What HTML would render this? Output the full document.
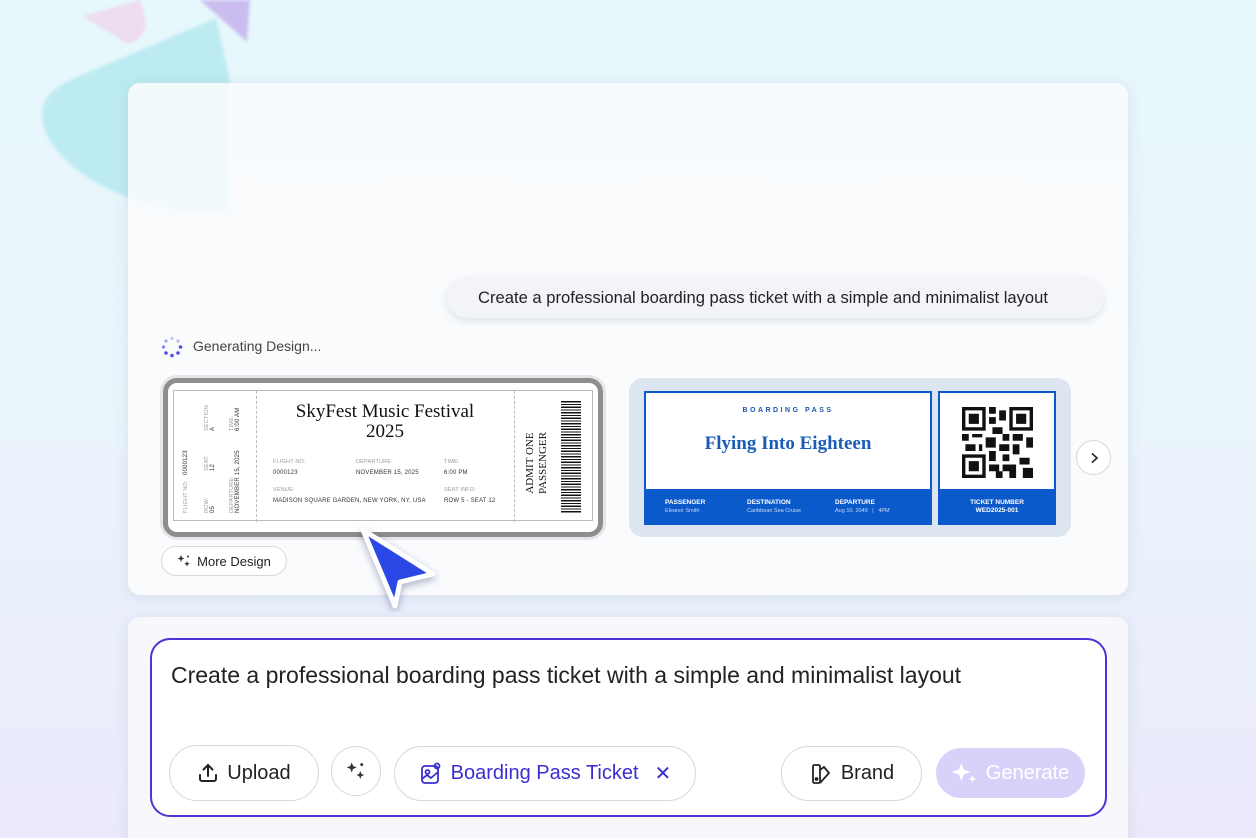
<!DOCTYPE html>
<html><head><meta charset="utf-8"><style>
*{box-sizing:border-box;margin:0;padding:0}
html{width:1256px;height:838px;overflow:hidden;background:#ebeafb}
body{width:1256px;height:838px;overflow:hidden;position:relative;font-family:"Liberation Sans",sans-serif;background:linear-gradient(180deg,#e6f8fc 0%,#eaf4fb 50%,#ebeafb 100%)}
.abs{position:absolute}
.panel{position:absolute;left:128px;width:1000px;border-radius:12px;background:rgba(250,252,253,.88);box-shadow:0 2px 14px rgba(120,140,170,.18)}
.pill{position:absolute;border:1.5px solid #d8d8dc;border-radius:30px;background:#fff;display:flex;align-items:center;justify-content:center;gap:8px;font-size:20px;color:#222}
.lbl{font-size:5.5px;color:#999;letter-spacing:.2px}
.val{font-size:6px;color:#333}
.rot{position:absolute;transform:rotate(-90deg);transform-origin:left top;white-space:nowrap}
</style></head><body>
<svg class="abs" style="left:0;top:0" width="300" height="240">
<defs><filter id="b"><feGaussianBlur stdDeviation="1.5"/></filter></defs>
<path d="M82 16 L140 0 L146 20 Q145 40 128 44 Z" fill="#eedcef" filter="url(#b)"/>
<path d="M200 0 L250 0 L247 42 Z" fill="#cbbdf0" filter="url(#b)"/>
<path d="M216 18 L230 80 L230 210 Q170 220 100 185 Q40 150 42 110 Q45 92 70 80 Z" fill="#b9eaf1" filter="url(#b)" opacity=".9"/>
</svg>
<div class="panel" style="top:83px;height:512px"></div>
<div class="panel" style="top:617px;height:240px;background:rgba(248,249,252,.92)"></div>

<div class="abs" style="left:447px;top:277px;width:657px;height:41px;border-radius:21px;background:#f3f4f9;box-shadow:0 3px 8px rgba(100,110,150,.18);font-size:16.6px;color:#222;line-height:41px;padding-left:31px;white-space:nowrap">Create a professional boarding pass ticket with a simple and minimalist layout</div>

<svg class="abs" style="left:161px;top:336px" width="22" height="22">
<g fill="#5b48e0"><circle cx="11" cy="2.5" r="1.6" opacity=".3"/><circle cx="17" cy="5" r="1.6" opacity=".4"/><circle cx="19.5" cy="11" r="1.8"/><circle cx="17" cy="17" r="1.8"/><circle cx="11" cy="19.5" r="1.8"/><circle cx="5" cy="17" r="1.8"/><circle cx="2.5" cy="11" r="1.6" opacity=".7"/><circle cx="5" cy="5" r="1.6" opacity=".5"/></g></svg>
<div class="abs" style="left:193px;top:338px;font-size:14px;color:#444">Generating Design...</div>

<!-- card1 -->
<div class="abs" style="left:163px;top:378px;width:440px;height:159px;border-radius:14px;background:#fff;border:5px solid #8e8e8e;box-shadow:0 0 0 3px #e4e6ea">
 <div class="abs" style="left:5px;top:7px;width:420px;height:131px;border:1px solid #bbb">
  <div class="abs" style="left:82px;top:0;height:131px;border-left:1px dashed #bbb"></div>
  <div class="abs" style="left:340px;top:0;height:131px;border-left:1px dashed #bbb"></div>
  <div class="rot lbl" style="left:9px;top:122px">FLIGHT NO: &nbsp; <span class="val">0000123</span></div>
  <div class="rot lbl" style="left:30px;top:122px">ROW:<br><span class="val">05</span></div>
  <div class="rot lbl" style="left:30px;top:80px">SEAT:<br><span class="val">12</span></div>
  <div class="rot lbl" style="left:30px;top:40px">SECTION:<br><span class="val">A</span></div>
  <div class="rot lbl" style="left:55px;top:122px">DEPARTURE:<br><span class="val">NOVEMBER 15, 2025</span></div>
  <div class="rot lbl" style="left:55px;top:40px">TIME:<br><span class="val">6:00 AM</span></div>
  <div class="abs" style="left:82px;top:11px;width:258px;text-align:center;font-family:'Liberation Serif',serif;font-size:19px;line-height:20px;color:#111">SkyFest Music Festival<br>2025</div>
  <div class="abs lbl" style="left:99px;top:66px;line-height:11px">FLIGHT NO:<br><span class="val">0000123</span></div>
  <div class="abs lbl" style="left:182px;top:66px;line-height:11px">DEPARTURE:<br><span class="val">NOVEMBER 15, 2025</span></div>
  <div class="abs lbl" style="left:270px;top:66px;line-height:11px">TIME:<br><span class="val">6:00 PM</span></div>
  <div class="abs lbl" style="left:99px;top:94px;line-height:11px">VENUE:<br><span class="val">MADISON SQUARE GARDEN, NEW YORK, NY, USA</span></div>
  <div class="abs lbl" style="left:270px;top:94px;line-height:11px">SEAT INFO:<br><span class="val">ROW 5 - SEAT 12</span></div>
  <div class="rot" style="left:350px;top:103px;font-family:'Liberation Serif',serif;font-size:11px;line-height:13px;color:#111;text-align:center">ADMIT ONE<br>PASSENGER</div>
  <div class="abs" style="left:387px;top:10px;width:20px;height:112px;background:repeating-linear-gradient(180deg,#111 0 1.5px,#fff 1.5px 3px,#111 3px 4px,#fff 4px 5.5px)"></div>
 </div>
</div>

<!-- card2 -->
<div class="abs" style="left:629px;top:378px;width:442px;height:159px;border-radius:14px;background:#dce5f0">
 <div class="abs" style="left:15px;top:13px;width:288px;height:134px;background:#0a5acb;padding:2px">
  <div style="background:#fff;height:96px;text-align:center">
   <div style="padding-top:14px;font-size:7px;letter-spacing:2.5px;color:#1d55b0;font-weight:bold">BOARDING PASS</div>
   <div style="margin-top:19px;font-family:'Liberation Serif',serif;font-weight:bold;font-size:19px;color:#1b5cb6">Flying Into Eighteen</div>
  </div>
  <div class="abs" style="left:21px;top:108px;font-size:6.5px;color:#fff;font-weight:bold">PASSENGER<div style="font-weight:normal;font-size:5.5px;color:#c7d8f5;margin-top:2px">Eleanor Smith</div></div>
  <div class="abs" style="left:103px;top:108px;font-size:6.5px;color:#fff;font-weight:bold">DESTINATION<div style="font-weight:normal;font-size:5.5px;color:#c7d8f5;margin-top:2px">Caribbean Sea Cruise</div></div>
  <div class="abs" style="left:191px;top:108px;font-size:6.5px;color:#fff;font-weight:bold">DEPARTURE<div style="font-weight:normal;font-size:5.5px;color:#c7d8f5;margin-top:2px">Aug 10, 2049 &nbsp; | &nbsp; 4PM</div></div>
 </div>
 <div class="abs" style="left:309px;top:13px;width:118px;height:134px;background:#0a5acb;padding:2px">
  <div style="background:#fff;height:96px;position:relative">
   <svg class="abs" style="left:22px;top:14px" width="71" height="71" viewBox="0 0 21 21"><g fill="#111"><path d="M0 0h7v7H0zM1 1v5h5V1zM2 2h3v3H2zM14 0h7v7h-7zM15 1v5h5V1zM16 2h3v3h-3zM0 14h7v7H0zM1 15v5h5v-5zM2 16h3v3H2z" fill-rule="evenodd"/><path d="M8 0h2v2H8zM11 1h2v3h-2zM8 3h2v2H8zM9 6h3v2H9zM0 8h2v2H0zM3 8h3v1H3zM7 9h3v3H7zM12 8h2v2h-2zM15 8h3v2h-3zM19 9h2v3h-2zM1 11h3v2H1zM5 11h1v2H5zM11 11h3v2h-3zM15 11h2v3h-2zM8 13h2v3H8zM12 14h2v2h-2zM17 15h3v2h-3zM8 17h3v2H8zM12 17h4v2h-4zM10 19h2v2h-2zM14 19h2v2h-2zM18 18h3v3h-3z"/></g></svg>
  </div>
  <div style="text-align:center;color:#fff;font-weight:bold;font-size:6.5px;margin-top:10px;line-height:8px">TICKET NUMBER<br>WED2025-001</div>
 </div>
</div>
<div class="abs" style="left:1076px;top:440px;width:35px;height:35px;border-radius:50%;background:#fff;border:1px solid #d8d8dc;display:flex;align-items:center;justify-content:center"><svg width="12" height="12"><path d="M4 1.5l5 4.5-5 4.5" stroke="#222" stroke-width="1.6" fill="none"/></svg></div>

<div class="pill" style="left:161px;top:546px;width:126px;height:30px;font-size:13px;gap:6px;border-width:1px"><svg width="14" height="14" viewBox="0 0 14 14" fill="#333"><path d="M4 1l1 2.5 2.5 1-2.5 1L4 8 3 5.5.5 4.5 3 3.5z"/><path d="M10 7l.8 2 2 .8-2 .8-.8 2-.8-2-2-.8 2-.8z"/><circle cx="11" cy="2.5" r="1"/></svg>More Design</div>

<svg class="abs" style="left:355px;top:522px" width="85" height="90"><path d="M8 8 L78 52 L45 60 L40 84 Z" fill="#2b48e6" stroke="#fff" stroke-width="5" stroke-linejoin="round" style="filter:drop-shadow(0 3px 4px rgba(0,0,80,.3))"/></svg>

<div class="abs" style="left:150px;top:638px;width:957px;height:179px;border:2px solid #4a35d6;border-radius:20px;background:#fff"></div>
<div class="abs" style="left:171px;top:662px;font-size:23px;color:#222;white-space:nowrap">Create a professional boarding pass ticket with a simple and minimalist layout</div>

<div class="pill" style="left:169px;top:745px;width:150px;height:56px"><svg width="22" height="22" viewBox="0 0 22 22" fill="none" stroke="#222" stroke-width="2" stroke-linecap="round"><path d="M11 14V3M6.5 7.5L11 3l4.5 4.5M3 13v4a2 2 0 002 2h12a2 2 0 002-2v-4"/></svg>Upload</div>
<div class="pill" style="left:331px;top:746px;width:50px;height:50px"><svg width="20" height="20" viewBox="0 0 14 14" fill="#333"><path d="M4 1l1 2.5 2.5 1-2.5 1L4 8 3 5.5.5 4.5 3 3.5z"/><path d="M10 7l.8 2 2 .8-2 .8-.8 2-.8-2-2-.8 2-.8z"/><circle cx="11" cy="2.5" r="1"/></svg></div>
<div class="pill" style="left:394px;top:746px;width:302px;height:55px;color:#3a2ed0"><svg width="24" height="24" viewBox="0 0 24 24" fill="none" stroke="#3a2ed0" stroke-width="1.8" stroke-linejoin="round"><rect x="3" y="4" width="16" height="17" rx="3"/><circle cx="8.5" cy="10" r="2"/><path d="M3 17l5-4 4 3 7-6"/><circle cx="18" cy="4" r="2.5"/></svg>Boarding Pass Ticket<span style="margin-left:8px;font-size:20px">✕</span></div>
<div class="pill" style="left:781px;top:746px;width:141px;height:55px"><svg width="24" height="24" viewBox="0 0 24 24" fill="none" stroke="#222" stroke-width="1.8" stroke-linejoin="round"><rect x="4" y="3" width="7" height="18" rx="1.5"/><path d="M11 8l4-3 5 6-9 10"/><circle cx="7.5" cy="17" r="1" fill="#222"/></svg>Brand</div>
<div class="abs" style="left:936px;top:748px;width:149px;height:50px;border-radius:25px;background:#d8d2fb;display:flex;align-items:center;justify-content:center;gap:8px;font-size:20px;color:#fff"><svg width="26" height="26" viewBox="0 0 14 14" fill="#fff"><path d="M5 1.5l1.3 3.7 3.7 1.3-3.7 1.3L5 11.5 3.7 7.8 0 6.5l3.7-1.3z"/><path d="M11 8l.6 1.6 1.6.6-1.6.6-.6 1.6-.6-1.6-1.6-.6 1.6-.6z"/></svg>Generate</div>
</body></html>
